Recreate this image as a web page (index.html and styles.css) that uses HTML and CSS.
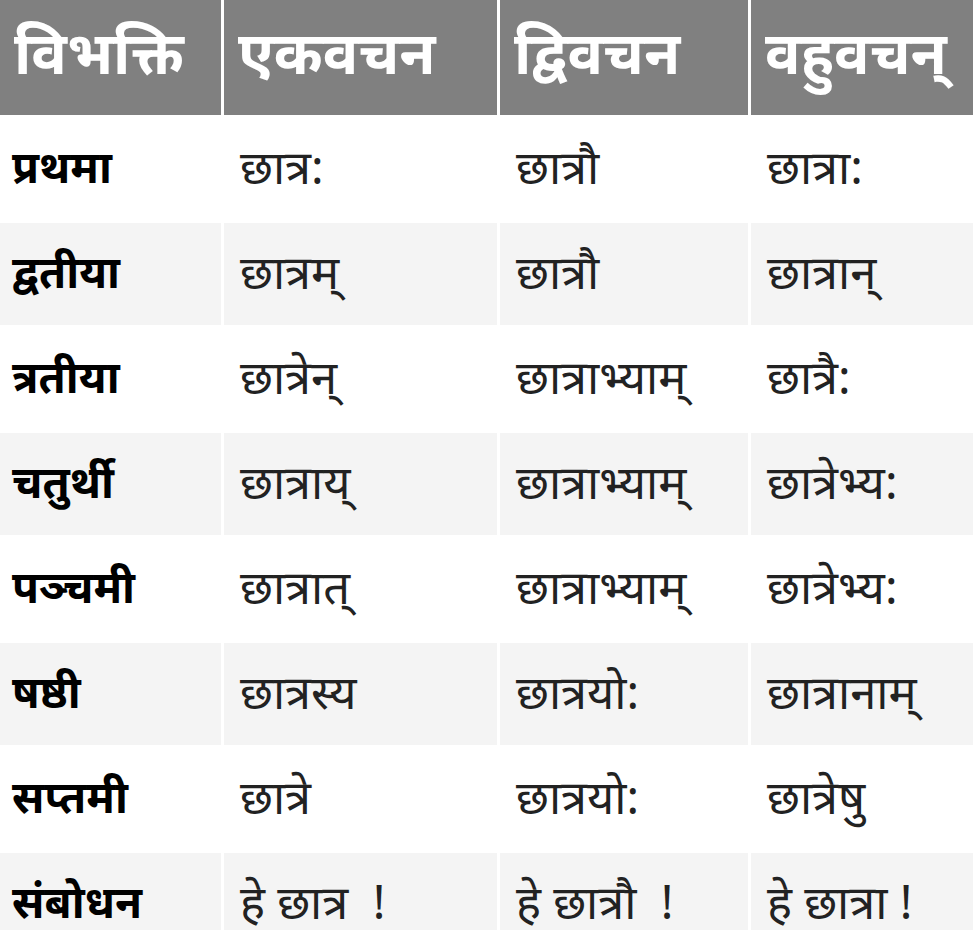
FILE: index.html
```html
<!DOCTYPE html>
<html lang="sa">
<head>
<meta charset="utf-8">
<link rel="stylesheet" href="styles.css">
</head>
<body>
<table class="vibhakti">
  <colgroup>
    <col class="c1"><col class="c2"><col class="c3"><col class="c4">
  </colgroup>
  <thead>
    <tr><th>विभक्ति</th><th>एकवचन</th><th>द्विवचन</th><th>वहुवचन्</th></tr>
  </thead>
  <tbody>
    <tr><td class="case">प्रथमा</td><td>छात्र:</td><td>छात्रौ</td><td>छात्रा:</td></tr>
    <tr><td class="case">द्वतीया</td><td>छात्रम्</td><td>छात्रौ</td><td>छात्रान्</td></tr>
    <tr><td class="case">त्रतीया</td><td>छात्रेन्</td><td>छात्राभ्याम्</td><td>छात्रै:</td></tr>
    <tr><td class="case">चतुर्थी</td><td>छात्राय्</td><td>छात्राभ्याम्</td><td>छात्रेभ्य:</td></tr>
    <tr><td class="case">पञ्चमी</td><td>छात्रात्</td><td>छात्राभ्याम्</td><td>छात्रेभ्य:</td></tr>
    <tr><td class="case">षष्ठी</td><td>छात्रस्य</td><td>छात्रयो:</td><td>छात्रानाम्</td></tr>
    <tr><td class="case">सप्तमी</td><td>छात्रे</td><td>छात्रयो:</td><td>छात्रेषु</td></tr>
    <tr><td class="case">संबोधन</td><td>हे छात्र&nbsp; !</td><td>हे छात्रौ&nbsp; !</td><td>हे छात्रा !</td></tr>
  </tbody>
</table>
</body>
</html>
```
FILE: styles.css
```css
html, body {
  margin: 0;
  padding: 0;
  background: #fff;
}
body {
  font-family: "Noto Sans", sans-serif;
  overflow: hidden;
}
.vibhakti {
  border-collapse: separate;
  border-spacing: 3px;
  margin: -3px;
  table-layout: fixed;
  width: 982px;
}
.c1 { width: 221px; }
.c2 { width: 273px; }
.c3 { width: 248px; }
.c4 { width: 225px; }
.vibhakti th {
  background: #808080;
  color: #fff;
  font-weight: 700;
  font-size: 59px;
  line-height: 1.2;
  text-align: left;
  height: 115px;
  padding: 0 12px 12px 14px;
  box-sizing: border-box;
  white-space: nowrap;
}
.vibhakti td {
  font-size: 47px;
  color: #222;
  height: 102px;
  padding: 0 16px 6px;
  box-sizing: border-box;
  white-space: nowrap;
}
.vibhakti td.case {
  font-size: 44px;
  font-weight: 700;
  color: #000;
  padding-left: 12px;
}
.vibhakti tbody tr:nth-child(even) td {
  background: #f4f4f4;
}
```
